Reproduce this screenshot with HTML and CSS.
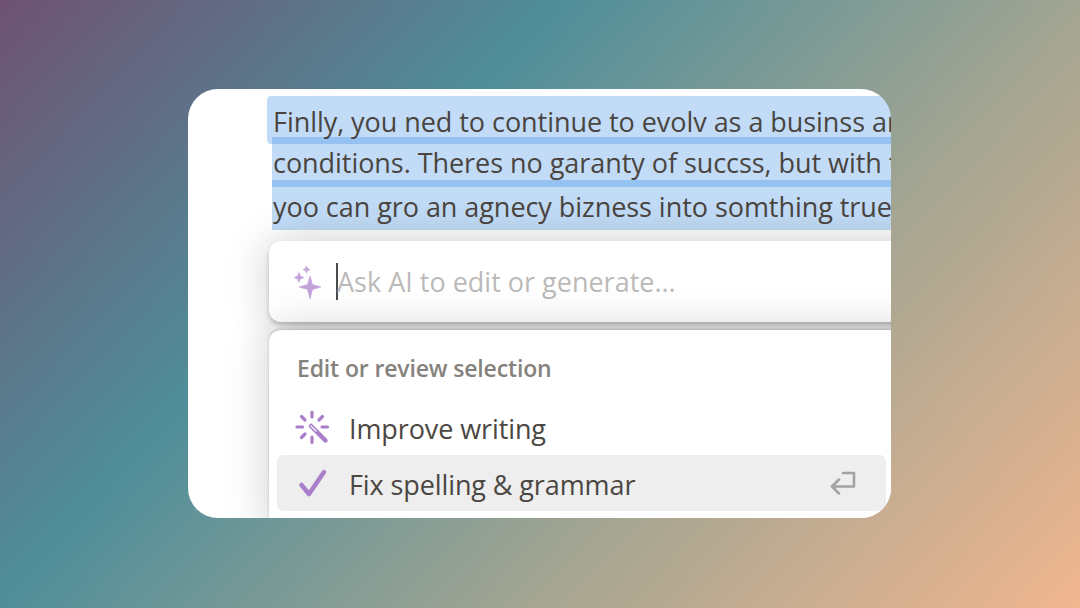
FILE: index.html
```html
<!DOCTYPE html>
<html lang="en">
<head>
<meta charset="utf-8">
<title>Ask AI</title>
<link rel="stylesheet" href="styles.css">
</head>
<body>
<main class="card">
  <div class="content">
    <div class="selection">
      <div class="line line-first">Finlly, you ned to continue to evolv as a businss and adapt</div>
      <div class="line line-second">conditions. Theres no garanty of succss, but with the right</div>
      <div class="line line-third">yoo can gro an agnecy bizness into somthing truely great.</div>
    </div>
    <div class="prompt">
      <svg class="sparkle" viewBox="0 0 30 40" aria-hidden="true">
        <path d="M17 13 L19.500 21.500 L28 24 L19.500 26.500 L17 36 L14.500 26.500 L6 24 L14.500 21.500Z"/>
        <path d="M6 9.500 L7.400 13.100 L11 14.500 L7.400 15.900 L6 19.500 L4.600 15.900 L1 14.500 L4.600 13.100Z"/>
        <path d="M13.500 3 L14.500 5.500 L17 6.500 L14.500 7.500 L13.500 10 L12.500 7.500 L10 6.500 L12.500 5.500Z"/>
      </svg>
      <span class="caret"></span>
      <span class="placeholder">Ask AI to edit or generate...</span>
    </div>
    <div class="menu">
      <div class="menu-title">Edit or review selection</div>
      <div class="item">
        <svg class="item-icon" viewBox="0 0 36 36" aria-hidden="true">
          <path class="tick" d="M17 2V7M17 27V32.500M2 17H7.500M27 17H32.500M6.500 6.500L10 10M27.500 6.500L24 10M6.500 27.500L10 24"/>
          <path class="wand" d="M16 16L30.500 30.500"/>
          <path class="wand-inner" d="M16 16L21 21"/>
        </svg>
        <span>Improve writing</span>
      </div>
      <div class="item item-active">
        <svg class="item-icon" viewBox="0 0 36 36" aria-hidden="true">
          <path class="check" d="M6.500 19L14 28L29 6"/>
        </svg>
        <span>Fix spelling &amp; grammar</span>
        <svg class="return" viewBox="0 0 26 24" aria-hidden="true">
          <path d="M13 2H24V15.500H2M9 8.500L2 15.500L9 22.500"/>
        </svg>
      </div>
    </div>
  </div>
</main>
</body>
</html>
```

FILE: styles.css
```css
* { box-sizing: border-box; }
html, body { margin: 0; height: 100%; }
body {
  width: 1080px;
  height: 608px;
  overflow: hidden;
  padding: 89px 0 0 188px;
  background: linear-gradient(133deg, #6f5272 0%, #4f8e9a 34%, #a3a592 66%, #f1b68f 100%);
  font-family: "Open Sans", "Noto Sans", sans-serif;
}
.card {
  width: 703px;
  height: 429px;
  background: #fff;
  border-radius: 30px;
  overflow: hidden;
  padding: 7px 0 0 84px;
}
.content { width: 760px; }
.selection { color: #4a4540; font-size: 27px; letter-spacing: -0.05px; }
.line {
  height: 50px;
  line-height: 51px;
  margin-bottom: -7px;
  padding-left: 1px;
  white-space: nowrap;
  background: rgba(35, 131, 226, 0.28);
}
.line-first {
  margin-left: -5px;
  padding-left: 6px;
  border-radius: 4px 0 0 4px;
  height: 48px;
}
.line-second { line-height: 52px; }
.line-third { line-height: 54px; }
.prompt {
  margin: 18px 0 0 -3px;
  height: 81px;
  padding-left: 24px;
  display: flex;
  align-items: center;
  background: #fff;
  border-radius: 12px;
  box-shadow: 0 3px 4px rgba(0, 0, 0, 0.2), 0 0 44px rgba(0, 0, 0, 0.2);
  position: relative;
}
.sparkle { width: 30px; height: 40px; margin-top: 2px; fill: #c3a3dc; stroke: #c3a3dc; stroke-width: 0.6; stroke-linejoin: round; flex: none; }
.caret { width: 2px; height: 37px; background: #4a4a4a; margin: 0 -1px 0 13px; flex: none; }
.placeholder { font-size: 27px; color: #bcbab8; letter-spacing: 0; }
.menu {
  margin: 8px 0 0 -3px;
  height: 200px;
  padding: 22px 8px 0;
  background: #fff;
  border-radius: 12px;
  box-shadow: 0 -1px 3px rgba(0, 0, 0, 0.18), 0 0 44px rgba(0, 0, 0, 0.2);
  position: relative;
}
.menu-title {
  padding-left: 20px;
  font-size: 23px;
  line-height: 32px;
  font-weight: 600;
  color: #85827e;
  letter-spacing: -0.15px;
}
.item {
  width: 609px;
  height: 56px;
  padding: 0 30px 0 18px;
  display: flex;
  align-items: center;
  font-size: 27px;
  line-height: 38px;
  color: #4b4742;
  letter-spacing: -0.1px;
  border-radius: 6px;
}
.item > span { padding-top: 3px; }
.menu-title + .item { margin-top: 15px; }
.item-active { background: #eeeeee; }
.item-icon { width: 36px; height: 36px; flex: none; margin: 1px 18px 0 0; fill: none; }
.tick { stroke: #a97fcb; stroke-width: 3.200; stroke-linecap: round; }
.wand { stroke: #a97fcb; stroke-width: 4.500; stroke-linecap: round; }
.wand-inner { stroke: #f1e9f7; stroke-width: 1.600; stroke-linecap: round; }
.check { stroke: #a97fcb; stroke-width: 4.500; stroke-linecap: round; stroke-linejoin: round; }
.return {
  width: 26px;
  height: 24px;
  flex: none;
  margin-left: auto;
  fill: none;
  stroke: #a3a3a3;
  stroke-width: 2.600;
  stroke-linecap: round;
  stroke-linejoin: round;
}
```
